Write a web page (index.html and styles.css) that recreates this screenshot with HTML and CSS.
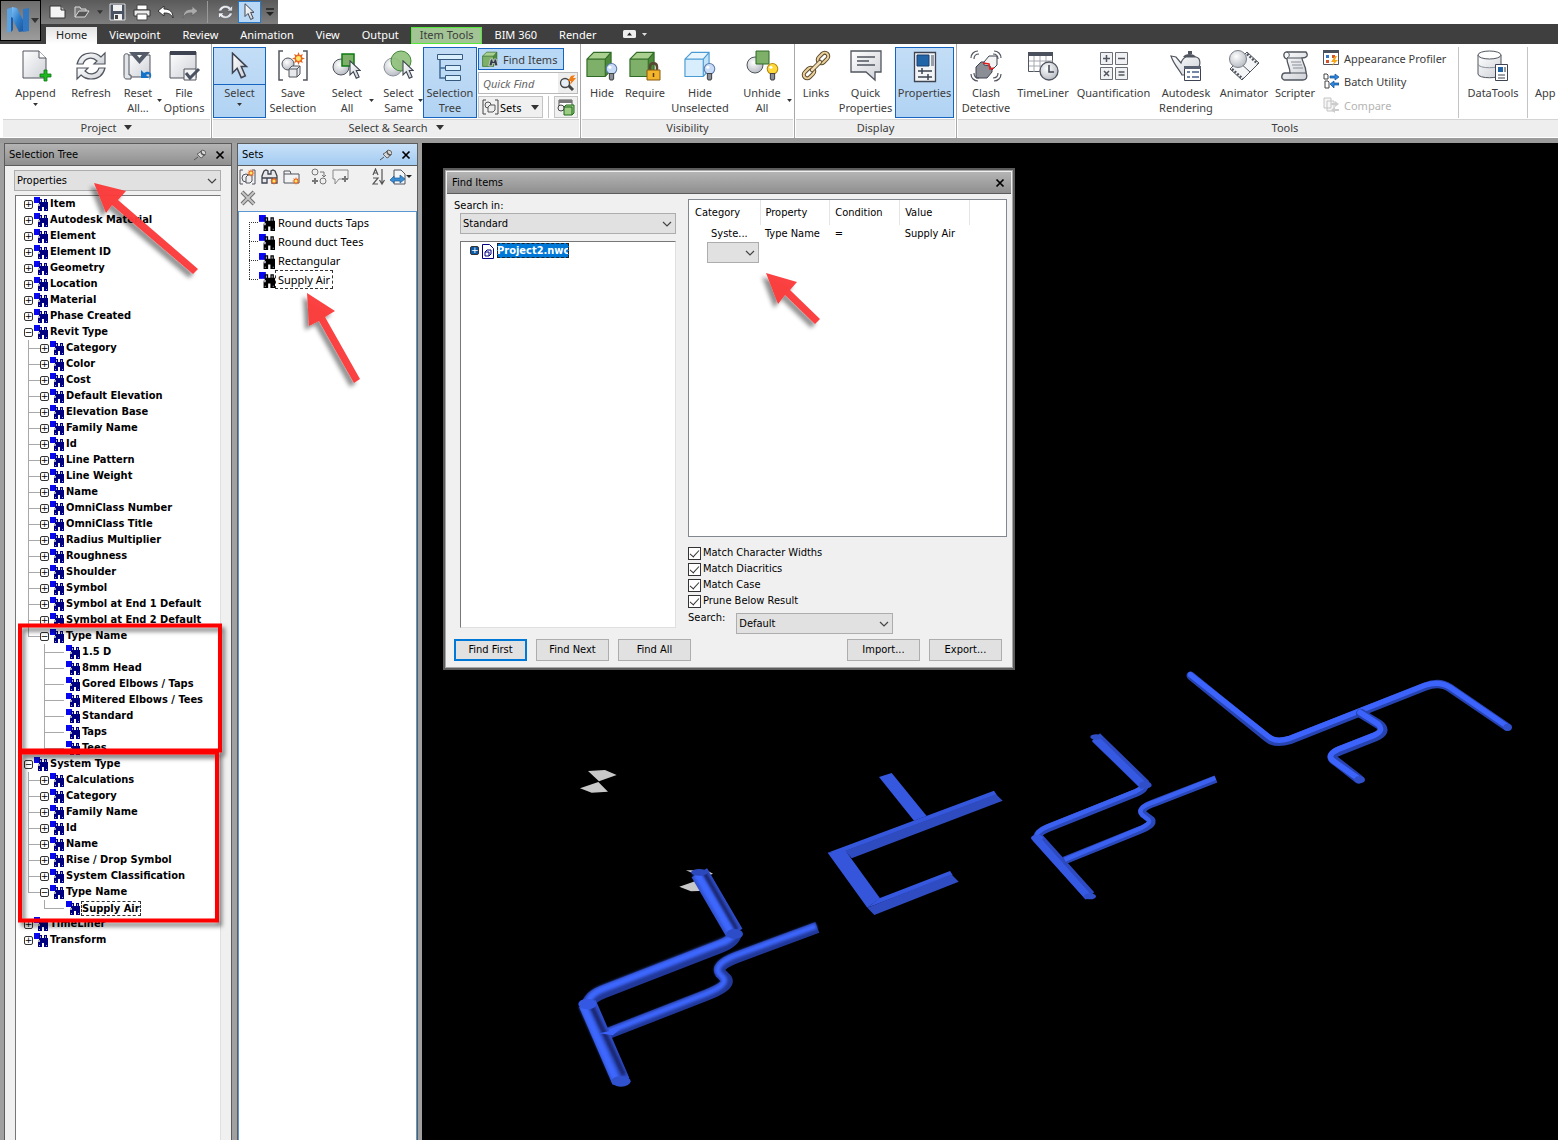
FILE: index.html
```html
<!DOCTYPE html>
<html lang="en">
<head>
<meta charset="utf-8">
<title>Navisworks</title>
<link rel="stylesheet" href="styles.css">
</head>
<body>
<svg class="sprite" aria-hidden="true">
  <defs>
    <linearGradient id="gPaper" x1="0" y1="0" x2="1" y2="1"><stop offset="0" stop-color="#fff"/><stop offset="1" stop-color="#cdd0d6"/></linearGradient>
    <radialGradient id="gBall" cx=".4" cy=".35" r=".7"><stop offset="0" stop-color="#fff"/><stop offset="1" stop-color="#b4b8c0"/></radialGradient>
    <linearGradient id="gN" x1="0" y1="0" x2="1" y2="1"><stop offset="0" stop-color="#7fc0f5"/><stop offset=".5" stop-color="#2d7cc9"/><stop offset="1" stop-color="#1b4f95"/></linearGradient>
    <filter id="fShadow" x="-20%" y="-20%" width="150%" height="150%"><feDropShadow dx="3" dy="4" stdDeviation="2" flood-color="#000" flood-opacity=".5"/></filter>
    <filter id="fLeft" x="-30%" y="-20%" width="160%" height="150%"><feDropShadow dx="-4" dy="4" stdDeviation="2" flood-color="#000" flood-opacity=".45"/></filter>
    <filter id="fRound" x="-10%" y="-10%" width="120%" height="120%"><feGaussianBlur stdDeviation="4"/></filter>
  </defs>
  <symbol id="binoc" viewBox="0 0 14 14">
    <path fill="#0808f0" d="M0 0h6v6H0z"/>
    <path fill="currentColor" d="M5 2h3v3h2V2h3v3h1v9h-4v-4H8v4H4V8l1-1z"/>
    <path fill="#aab" d="M6 3h1v2H6zM11 3h1v2h-1zM4 7h2v2H4zM5 12h1v1H5zM12 12h1v1h-1z"/>
  </symbol>
  <symbol id="cursor" viewBox="0 0 14 24"><path d="M1 1v17l4-4 3.500 8 3.500-1.600L8.500 12.500H13z" fill="url(#gPaper)" stroke="#3d4350" stroke-width="1.300"/></symbol>
  <symbol id="bulb" viewBox="0 0 12 17"><circle cx="6" cy="5.500" r="5" fill="var(--glow)" stroke="var(--rim)"/><path d="M4 10h4v5l-1 1H5l-1-1z" fill="#8a8f99" stroke="#444"/><circle cx="4.500" cy="4" r="1.500" fill="#fff"/></symbol>
  <symbol id="cube" viewBox="0 0 28 28"><path d="M1 9l7-7h18l-6 7z" fill="var(--top)"/><path d="M20 9l6-7v18l-6 7z" fill="var(--side)"/><path d="M1 9h19v18H1z" fill="var(--front)"/><path d="M1 9l7-7h18v18l-6 7H1zM1 9h19v18M20 9l6-7" fill="none" stroke="var(--edge)" stroke-width="1.200"/></symbol>
  <symbol id="spark" viewBox="0 0 12 12"><path d="M6 0l1.200 3L10 1.800 9 4.800 12 6 9 7.200l1 3L7.200 9 6 12 4.800 9 2 10.200l1-3L0 6l3-1.200-1-3L4.800 3z" fill="#e8641e"/><circle cx="6" cy="6" r="2.300" fill="#ffe96a"/></symbol>
  <symbol id="chev" viewBox="0 0 10 6"><path d="M1 1l4 4 4-4" fill="none" stroke="#444" stroke-width="1.200"/></symbol>
  <symbol id="tri" viewBox="0 0 8 5"><path d="M0 0h8L4 5z" fill="#333"/></symbol>
  <symbol id="pin" viewBox="0 0 12 12"><path d="M0 11l4-3" stroke="#555"/><path d="M3 5l4 4 2-1V7l3-2-1-3-3-1-3 3z" fill="#d8d8d8" stroke="#666"/><path d="M7 2c0 3 1 4 4 4" fill="none" stroke="#555" stroke-width="1.500"/></symbol>
  <symbol id="cross" viewBox="0 0 10 10"><path d="M1.500 1.500l7 7M8.500 1.500l-7 7" stroke="#000" stroke-width="1.700"/></symbol>
  <symbol id="refresh" viewBox="0 0 32 32"><path d="M2 14C4 6 10 3 16 3c4 0 7 1 10 4l4-4v11H19l3-3c-5-5-12-3-14 3z" fill="url(#gPaper)" stroke="#50555f" stroke-width="1.200"/><path d="M30 18c-2 8-8 11-14 11-4 0-7-1-10-4l-4 4V18h11l-3 3c5 5 12 3 14-3z" fill="url(#gPaper)" stroke="#50555f" stroke-width="1.200"/></symbol>
</svg>

<header class="top">
  <button class="app" aria-label="Application menu">
    <svg width="26" height="32" viewBox="0 0 26 32"><path d="M2 4l6-2v23l-6 3z" fill="#5aa2e0"/><path d="M7 2l5 1 8 16v7l-6 1L7 13z" fill="url(#gN)"/><path d="M18 4l6-1v23l-6 1z" fill="#3177c2"/><path d="M8 13v12l-2 2V12z" fill="#1f5ca5"/></svg>
    <svg width="8" height="5"><use href="#tri"/></svg>
  </button>
  <div class="qat">
    <button aria-label="New"><svg width="18" height="16" viewBox="0 0 18 16"><path d="M1 2h11l4 4v8H1z" fill="#f4f4f4" stroke="#333"/><path d="M12 2v4h4" fill="#bbb" stroke="#333"/></svg></button>
    <button aria-label="Open"><svg width="18" height="16" viewBox="0 0 18 16"><path d="M2 13V3h5l1 2h5v3" fill="#777" stroke="#ddd"/><path d="M2 13l4-6h10l-4 6z" fill="#555" stroke="#ddd"/></svg></button>
    <svg width="6" height="4"><use href="#tri"/></svg>
    <button aria-label="Save"><svg width="18" height="18" viewBox="0 0 18 18"><path d="M1 1h15v16H1z" fill="#4a5160" stroke="#ddd"/><path d="M4 2h9v6H4zM5 11h8v6H5z" fill="#f2f2f2"/><path d="M6 12h3v4H6z" fill="#444"/></svg></button>
    <button aria-label="Print"><svg width="18" height="18" viewBox="0 0 18 18"><path d="M4 2h10v5H4z" fill="#fff" stroke="#444"/><path d="M1 7h16v6H1z" fill="#ececec" stroke="#333"/><path d="M4 11h10v6H4z" fill="#fff" stroke="#444"/></svg></button>
    <button aria-label="Undo"><svg width="18" height="16" viewBox="0 0 18 16"><path d="M1 7l6-5v3c6 0 9 3 9 9-2-4-4-5-9-5v3z" fill="#fff" stroke="#333"/></svg></button>
    <button aria-label="Redo"><svg width="18" height="16" viewBox="0 0 18 16"><path d="M17 7l-6-5v3c-6 0-9 3-9 9 2-4 4-5 9-5v3z" fill="#aaa" stroke="#666"/></svg></button>
    <i class="qsep"></i>
    <button aria-label="Refresh"><svg width="17" height="16"><use href="#refresh"/></svg></button>
    <button class="on" aria-label="Select"><svg width="11" height="18"><use href="#cursor"/></svg></button>
    <button class="more" aria-label="Customize"><svg width="10" height="9" viewBox="0 0 10 9"><path d="M1 1h8" stroke="#222" stroke-width="1.500"/><path d="M1 4h8L5 8z" fill="#222"/></svg></button>
  </div>
  <nav class="tabs">
    <a href="#" class="tab home">Home</a><a href="#" class="tab">Viewpoint</a><a href="#" class="tab">Review</a><a href="#" class="tab">Animation</a><a href="#" class="tab">View</a><a href="#" class="tab">Output</a><a href="#" class="tab item">Item Tools</a><a href="#" class="tab">BIM 360</a><a href="#" class="tab">Render</a>
    <button class="mini" aria-label="Minimize ribbon"><svg width="24" height="8" viewBox="0 0 24 8"><rect width="13" height="8" rx="1.500" fill="#eee"/><path d="M4 5.500l2.500-3 2.500 3z" fill="#222"/><path d="M19 3h5l-2.500 3z" fill="#ddd"/></svg></button>
  </nav>
</header>

<section class="ribbon">
  <div class="panel project">
    <div class="tools">
      <button class="big"><svg width="32" height="32" viewBox="0 0 32 32"><path d="M3 1h16l7 7v20H3z" fill="url(#gPaper)" stroke="#50555f"/><path d="M19 1v7h7" fill="#fff" stroke="#50555f"/><path d="M24 20h3v4h4v3h-4v4h-3v-4h-4v-3h4z" fill="#1fb81f" stroke="#0b7a10" stroke-width=".8"/></svg><span>Append</span><svg class="under" width="5" height="3"><use href="#tri"/></svg></button>
      <button class="big"><svg width="32" height="32"><use href="#refresh"/></svg><span>Refresh</span></button>
      <button class="big"><svg width="32" height="32" viewBox="0 0 32 32"><path d="M6 5h22v22H6z" fill="url(#gPaper)" stroke="#50555f"/><path d="M2 6c0-3 5-3 5 0v19h2v4H5c-3 0-3-2-3-4z" fill="#e3e5e9" stroke="#50555f"/><path d="M7 2h21L17.500 14z" fill="#555c69"/><path d="M15 5h5l-2.500 3z" fill="#fff"/><path d="M19 20v8h8l-3-3c3-2 5 0 3 5 5-5 1-11-5-7z" fill="#1472c8"/></svg><span>Reset<br>All...</span><svg class="side" width="5" height="3"><use href="#tri"/></svg></button>
      <button class="big"><svg width="32" height="32" viewBox="0 0 32 32"><path d="M2 2h26v26H2z" fill="url(#gPaper)" stroke="#50555f"/><path d="M2 1h26v4H2z" fill="#3d4350"/><path d="M16 19h12v11H16z" fill="#f4f4f4" stroke="#50555f"/><path d="M18 23l4 5 9-9" fill="none" stroke="#4a5262" stroke-width="3"/></svg><span>File<br>Options</span></button>
    </div>
    <h2>Project <svg width="8" height="5"><use href="#tri"/></svg></h2>
  </div>

  <div class="panel search">
    <div class="tools">
      <button class="big on split"><span class="ico"><svg width="19" height="28"><use href="#cursor"/></svg></span><span>Select</span><svg class="under" width="5" height="3"><use href="#tri"/></svg></button>
      <button class="big"><svg width="32" height="32" viewBox="0 0 32 32"><path d="M6 1H2v29h4M26 1h4v29h-4" fill="none" stroke="#50555f" stroke-width="1.500"/><circle cx="11" cy="14" r="6" fill="url(#gBall)" stroke="#50555f"/><path d="M12 19l3-3h8v8l-3 3h-8zM12 19h8v8M20 19l3-3" fill="#e8e9ec" stroke="#50555f"/><use href="#spark" x="15" y="2" width="13" height="13"/></svg><span>Save<br>Selection</span></button>
      <button class="big"><svg width="32" height="32" viewBox="0 0 32 32"><circle cx="10" cy="17" r="8" fill="url(#gBall)" stroke="#50555f"/><path d="M11 4h12v12H11z" fill="#7fb069" stroke="#0c7a12" stroke-width="1.500"/><use href="#cursor" x="18" y="10" width="12" height="20"/></svg><span>Select<br>All</span><svg class="side" width="5" height="3"><use href="#tri"/></svg></button>
      <button class="big"><svg width="32" height="32" viewBox="0 0 32 32"><circle cx="10" cy="17" r="9" fill="url(#gBall)" stroke="#8a8f99"/><circle cx="18" cy="11" r="10" fill="#8fc07a" stroke="#3f8a35" fill-opacity=".9"/><use href="#cursor" x="19" y="10" width="12" height="20"/></svg><span>Select<br>Same</span><svg class="side" width="5" height="3"><use href="#tri"/></svg></button>
      <button class="big on"><svg width="32" height="32" viewBox="0 0 32 32"><path d="M6 6v21h6M6 17h6" fill="none" stroke="#3f6a94" stroke-width="1.500"/><path d="M3.500 3.500h25v5h-25zM11.500 14.500h15v5h-15zM11.500 24.500h15v5h-15z" fill="#d9effc" stroke="#35597d"/></svg><span>Selection<br>Tree</span></button>
      <div class="stack">
        <button class="find"><svg width="16" height="16" viewBox="0 0 28 28" class="green"><use href="#cube"/><path d="M12 26l3-12h4v4h2v-4h4l3 12h-6v-4h-4v4z" fill="#333b48" stroke="#fff"/></svg>Find Items</button>
        <div class="quick"><input type="text" placeholder="Quick Find" aria-label="Quick Find"><button aria-label="Search"><svg width="17" height="17" viewBox="0 0 17 17"><path d="M9 10l5 5" stroke="#444" stroke-width="3"/><circle cx="6" cy="8" r="4.500" fill="#e8eef5" stroke="#444" stroke-width="1.300"/><path d="M12 1l-3 5h3l-1 4 6-7h-3l2-3z" fill="#f07c14"/></svg></button></div>
        <div class="setsrow"><button class="sets"><svg width="17" height="16" viewBox="0 0 17 16"><path d="M4 1H1v14h3M13 1h3v14h-3" fill="none" stroke="#444"/><circle cx="6" cy="6" r="3" fill="#eee" stroke="#555"/><path d="M6 8l2-2h5v5l-2 2H6z" fill="#eee" stroke="#555"/></svg>Sets<svg class="push" width="8" height="5"><use href="#tri"/></svg></button><i></i><button class="sq" aria-label="Selection inspector"><svg width="18" height="18" viewBox="0 0 18 18"><path d="M2 2h13v10H2z" fill="#fff" stroke="#555"/><path d="M2 2h13v3H2z" fill="#777"/><path d="M7 9l2-2h8v8l-2 2H7z" fill="#9ccb84" stroke="#1d6b17"/><path d="M7 9h8v8" fill="none" stroke="#1d6b17"/><circle cx="4" cy="10" r="3" fill="#eee" stroke="#444"/></svg></button></div>
      </div>
    </div>
    <h2>Select &amp; Search <svg width="8" height="5"><use href="#tri"/></svg></h2>
  </div>

  <div class="panel visibility">
    <div class="tools">
      <button class="big"><svg width="32" height="32" viewBox="0 0 32 32" class="green"><use href="#cube" width="27" height="28"/><use href="#bulb" class="cool" x="19" y="13" width="13" height="18"/></svg><span>Hide</span></button>
      <button class="big"><svg width="32" height="32" viewBox="0 0 32 32" class="green"><use href="#cube" width="27" height="28"/><path d="M21 21v-4c0-5 7-5 7 0v4" fill="none" stroke="#5a4632" stroke-width="2.500"/><path d="M18 20h13v10H18z" fill="#f3b52c" stroke="#8a5a10"/><path d="M24.500 23v4" stroke="#5a3a08" stroke-width="1.500"/></svg><span>Require</span></button>
      <button class="big"><svg width="32" height="32" viewBox="0 0 32 32" class="ice"><use href="#cube" width="27" height="28"/><use href="#bulb" class="cool" x="19" y="13" width="13" height="18"/></svg><span>Hide<br>Unselected</span></button>
      <button class="big"><svg width="32" height="32" viewBox="0 0 32 32"><circle cx="9" cy="15" r="8" fill="url(#gBall)" stroke="#50555f"/><path d="M10 1h13v13H10z" fill="#7fb069" stroke="#2f6b25"/><use href="#bulb" class="warm" x="20" y="13" width="13" height="18"/></svg><span>Unhide<br>All</span><svg class="side" width="5" height="3"><use href="#tri"/></svg></button>
    </div>
    <h2>Visibility</h2>
  </div>

  <div class="panel display">
    <div class="tools">
      <button class="big"><svg width="32" height="32" viewBox="0 0 32 32"><g fill="none" stroke="#5b4a30" stroke-width="4"><rect x="-6" y="-3.500" width="12" height="7" rx="3.500" transform="translate(23 8) rotate(-45)"/><rect x="-6" y="-3.500" width="12" height="7" rx="3.500" transform="translate(9 23) rotate(-45)"/></g><g fill="none" stroke="#ecd09a" stroke-width="2"><rect x="-6" y="-3.500" width="12" height="7" rx="3.500" transform="translate(23 8) rotate(-45)"/><rect x="-6" y="-3.500" width="12" height="7" rx="3.500" transform="translate(9 23) rotate(-45)"/></g><path d="M12 20l8-8" stroke="#5b4a30" stroke-width="4.500" stroke-linecap="round"/><path d="M12 20l8-8" stroke="#f2ddb2" stroke-width="2.500" stroke-linecap="round"/></svg><span>Links</span></button>
      <button class="big"><svg width="32" height="32" viewBox="0 0 32 32"><path d="M1 1h30v21h-6v8l-9-8H1z" fill="url(#gPaper)" stroke="#50555f" stroke-width="1.300"/><path d="M7 7h18M7 11h12M7 15h18" stroke="#50555f" stroke-width="1.500"/></svg><span>Quick<br>Properties</span></button>
      <button class="big on"><svg width="32" height="32" viewBox="0 0 32 32"><path d="M5.500 1.500h21v29h-21z" fill="#f3f4f6" stroke="#3d4350" stroke-width="1.300"/><path d="M8 4h12v11H8z" fill="#2264a8" stroke="#173f6e"/><path d="M22 4h3v11h-3z" fill="#9aa0aa"/><path d="M9 20h14M9 26h14M13 17v6M19 23v6" stroke="#3d4350" stroke-width="1.500"/></svg><span>Properties</span></button>
    </div>
    <h2>Display</h2>
  </div>

  <div class="panel last">
    <div class="tools">
      <button class="big"><svg width="32" height="32" viewBox="0 0 32 32"><path d="M6 17l5-5h11v10l-5 6H6z" fill="#8b8e94" stroke="#3d4350"/><path d="M14 12l5-6h8v9l-5 5-2-4-6-1z" fill="#f4f4f4" stroke="#3d4350"/><path d="M13 13l6 1 1 5 4-1" fill="none" stroke="#e02020" stroke-width="1.500"/><path d="M1 8c0-4 3-7 7-7M4 9c0-3 2-5 5-5M31 8c0-4-3-7-7-7M28 9c0-3-2-5-5-5M1 24c0 4 3 7 7 7M4 23c0 3 2 5 5 5M31 24c0 4-3 7-7 7M28 23c0 3-2 5-5 5" fill="none" stroke="#50555f" stroke-width="1.200"/></svg><span>Clash<br>Detective</span></button>
      <button class="big"><svg width="32" height="32" viewBox="0 0 32 32"><path d="M1.500 2.500h24v19h-24z" fill="#fff" stroke="#50555f"/><path d="M1 2h25v4H1z" fill="#4a505c"/><path d="M2 11h24M2 16h24M7 6v16M13 6v16M19 6v16" stroke="#a4a8b0"/><circle cx="22" cy="21" r="9" fill="url(#gBall)" stroke="#50555f" stroke-width="1.300"/><path d="M22 15v7h5" fill="none" stroke="#3d4350" stroke-width="1.500"/></svg><span>TimeLiner</span></button>
      <button class="big"><svg width="32" height="32" viewBox="0 0 32 32"><path d="M2.500 2.500h12v12h-12zM17.500 2.500h12v12h-12zM2.500 17.500h12v12h-12zM17.500 17.500h12v12h-12z" fill="#f0f1f3" stroke="#6a6e76"/><path d="M5 8.500h7M8.500 5v7M20 8.500h7M6 21l5 5M11 21l-5 5M20.500 22h6M20.500 25h6" stroke="#50555f" stroke-width="1.500"/></svg><span>Quantification</span></button>
      <button class="big"><svg width="32" height="32" viewBox="0 0 32 32"><path d="M1 6l5 1 5 6c1-3 2-5 5-6h10c5 1 5 9 1 12l-3 6H12C9 19 4 15 1 6z" fill="url(#gPaper)" stroke="#50555f" stroke-width="1.200"/><path d="M13 7c2-4 11-4 13 0zM18 1h4v3h-4z" fill="#50555f"/><path d="M14.500 16.500h16v14h-16z" fill="#fff" stroke="#3d4350"/><path d="M14 16h17v3H14z" fill="#5a6170"/><path d="M17 22h3M22 22h7M17 27h3M22 27h7" stroke="#45618a" stroke-width="1.500"/></svg><span>Autodesk<br>Rendering</span></button>
      <button class="big"><svg width="32" height="32" viewBox="0 0 32 32"><path d="M2 19L19 2l12 11-17 17z" fill="#f4f5f6" stroke="#50555f"/><path d="M10 11l12 11" stroke="#50555f"/><path d="M4 19l11 10M19 4l11 10" fill="none" stroke="#50555f" stroke-width="2.500" stroke-dasharray="2 1.500"/><circle cx="10" cy="9" r="8.500" fill="url(#gBall)" stroke="#7a7f89"/></svg><span>Animator</span></button>
      <button class="big"><svg width="32" height="32" viewBox="0 0 32 32"><path d="M7 2h20c3 4 0 6-4 6 0 4 4 8 4 14 2 6 0 8-3 8H5c-4-2-2-7 1-7h5c0-6-3-9-3-14-4-1-4-6-1-7z" fill="url(#gPaper)" stroke="#50555f" stroke-width="1.300"/><path d="M8 8h15M8 2c3 1 3 5 0 6M11 23h16" fill="none" stroke="#50555f"/><path d="M12 12h10M13 15h10M14 18h10" stroke="#8a8f99"/></svg><span>Scripter</span></button>
      <div class="links">
        <button><svg width="16" height="16" viewBox="0 0 16 16"><path d="M.5.500h15v14H.5z" fill="#fff" stroke="#50555f"/><path d="M0 0h16v3H0z" fill="#4a505c"/><path d="M3 5h3v3H3z" fill="#3475c4"/><path d="M9 5h3v3H9zM3 10h3v3H3z" fill="#d2542c"/><path d="M12 6l-4 6h3l-2 4 6-6h-3l2-4z" fill="#f7a41d"/></svg>Appearance Profiler</button>
        <button><svg width="16" height="16" viewBox="0 0 16 16"><path d="M1 1h3l1 1v4H1zM2 8h3l1 1v6H2z" fill="#fff" stroke="#444"/><path d="M7 3h5V1l4 3-4 3V5H7zM16 10h-5V8l-4 3 4 4v-3h5z" fill="#2d86dc" stroke="#0d4d94" stroke-width=".7"/></svg>Batch Utility</button>
        <button disabled><svg width="16" height="16" viewBox="0 0 16 16"><path d="M1 1h7v10H1zM4 4h7v10H4z" fill="#f6f6f6" stroke="#c4c4c4"/><path d="M8 6h4V4l4 3-4 3V8H8zM16 12h-4v-2l-4 3 4 3v-2h4z" fill="#ccc"/></svg>Compare</button>
      </div>
      <button class="big edge"><svg width="32" height="32" viewBox="0 0 32 32"><path d="M1 5v19c0 5 23 5 23 0V5" fill="url(#gPaper)" stroke="#50555f"/><ellipse cx="12.500" cy="5" rx="11.500" ry="4" fill="#fff" stroke="#50555f"/><path d="M1 14c0 5 23 5 23 0" fill="none" stroke="#8a8f99"/><path d="M18.500 14.500h12v16h-12z" fill="#fff" stroke="#3d4350"/><path d="M21 17h5v5h-5z" fill="#2264a8"/><path d="M27 17h2v5h-2z" fill="#999"/><path d="M21 25h7M21 28h7" stroke="#3d4350"/></svg><span>DataTools</span></button>
      <button class="big edge manager"><span>App</span></button>
    </div>
    <h2>Tools</h2>
  </div>
</section>

<main class="work">
  <section class="dock tree-dock">
    <div class="cap">Selection Tree<svg class="push" width="12" height="12"><use href="#pin"/></svg><button aria-label="Close"><svg width="10" height="10"><use href="#cross"/></svg></button></div>
    <div class="combo"><select aria-label="Tree mode"><option>Properties</option></select><svg width="10" height="6"><use href="#chev"/></svg></div>
    <ul class="tree">
      <li><div><button>+</button><svg><use href="#binoc"/></svg>Item</div></li>
      <li><div><button>+</button><svg><use href="#binoc"/></svg>Autodesk Material</div></li>
      <li><div><button>+</button><svg><use href="#binoc"/></svg>Element</div></li>
      <li><div><button>+</button><svg><use href="#binoc"/></svg>Element ID</div></li>
      <li><div><button>+</button><svg><use href="#binoc"/></svg>Geometry</div></li>
      <li><div><button>+</button><svg><use href="#binoc"/></svg>Location</div></li>
      <li><div><button>+</button><svg><use href="#binoc"/></svg>Material</div></li>
      <li><div><button>+</button><svg><use href="#binoc"/></svg>Phase Created</div></li>
      <li><div><button>−</button><svg><use href="#binoc"/></svg>Revit Type</div>
        <ul>
          <li><div><button>+</button><svg><use href="#binoc"/></svg>Category</div></li>
          <li><div><button>+</button><svg><use href="#binoc"/></svg>Color</div></li>
          <li><div><button>+</button><svg><use href="#binoc"/></svg>Cost</div></li>
          <li><div><button>+</button><svg><use href="#binoc"/></svg>Default Elevation</div></li>
          <li><div><button>+</button><svg><use href="#binoc"/></svg>Elevation Base</div></li>
          <li><div><button>+</button><svg><use href="#binoc"/></svg>Family Name</div></li>
          <li><div><button>+</button><svg><use href="#binoc"/></svg>Id</div></li>
          <li><div><button>+</button><svg><use href="#binoc"/></svg>Line Pattern</div></li>
          <li><div><button>+</button><svg><use href="#binoc"/></svg>Line Weight</div></li>
          <li><div><button>+</button><svg><use href="#binoc"/></svg>Name</div></li>
          <li><div><button>+</button><svg><use href="#binoc"/></svg>OmniClass Number</div></li>
          <li><div><button>+</button><svg><use href="#binoc"/></svg>OmniClass Title</div></li>
          <li><div><button>+</button><svg><use href="#binoc"/></svg>Radius Multiplier</div></li>
          <li><div><button>+</button><svg><use href="#binoc"/></svg>Roughness</div></li>
          <li><div><button>+</button><svg><use href="#binoc"/></svg>Shoulder</div></li>
          <li><div><button>+</button><svg><use href="#binoc"/></svg>Symbol</div></li>
          <li><div><button>+</button><svg><use href="#binoc"/></svg>Symbol at End 1 Default</div></li>
          <li><div><button>+</button><svg><use href="#binoc"/></svg>Symbol at End 2 Default</div></li>
          <li><div><button>−</button><svg><use href="#binoc"/></svg>Type Name</div>
            <ul class="leaves">
              <li><div><svg><use href="#binoc"/></svg>1.5 D</div></li>
              <li><div><svg><use href="#binoc"/></svg>8mm Head</div></li>
              <li><div><svg><use href="#binoc"/></svg>Gored Elbows / Taps</div></li>
              <li><div><svg><use href="#binoc"/></svg>Mitered Elbows / Tees</div></li>
              <li><div><svg><use href="#binoc"/></svg>Standard</div></li>
              <li><div><svg><use href="#binoc"/></svg>Taps</div></li>
              <li><div><svg><use href="#binoc"/></svg>Tees</div></li>
            </ul>
          </li>
        </ul>
      </li>
      <li><div><button>−</button><svg><use href="#binoc"/></svg>System Type</div>
        <ul>
          <li><div><button>+</button><svg><use href="#binoc"/></svg>Calculations</div></li>
          <li><div><button>+</button><svg><use href="#binoc"/></svg>Category</div></li>
          <li><div><button>+</button><svg><use href="#binoc"/></svg>Family Name</div></li>
          <li><div><button>+</button><svg><use href="#binoc"/></svg>Id</div></li>
          <li><div><button>+</button><svg><use href="#binoc"/></svg>Name</div></li>
          <li><div><button>+</button><svg><use href="#binoc"/></svg>Rise / Drop Symbol</div></li>
          <li><div><button>+</button><svg><use href="#binoc"/></svg>System Classification</div></li>
          <li><div><button>−</button><svg><use href="#binoc"/></svg>Type Name</div>
            <ul class="leaves"><li><div><svg><use href="#binoc"/></svg><span class="focus">Supply Air</span></div></li></ul>
          </li>
        </ul>
      </li>
      <li><div><button>+</button><svg><use href="#binoc"/></svg>TimeLiner</div></li>
      <li><div><button>+</button><svg><use href="#binoc"/></svg>Transform</div></li>
    </ul>
  </section>

  <section class="dock sets-dock">
    <div class="cap">Sets<svg class="push" width="12" height="12"><use href="#pin"/></svg><button aria-label="Close"><svg width="10" height="10"><use href="#cross"/></svg></button></div>
    <div class="bar">
      <button aria-label="Save selection"><svg width="18" height="18" viewBox="0 0 18 18"><path d="M4 2H1v14h3M13 2h3v14h-3" fill="none" stroke="#50555f"/><circle cx="7" cy="10" r="4" fill="#eee" stroke="#50555f"/><path d="M7 9l2-2h4v6l-2 2H7z" fill="#eee" stroke="#50555f"/><use href="#spark" x="8" y="1" width="8" height="8"/></svg></button>
      <button aria-label="Save search"><svg width="18" height="18" viewBox="0 0 18 18"><path d="M1 15V8l2-5 2-1 2 1v3h3V3l2-1 2 1 2 5v7h-5v-5H6v5zM1 10h5M11 10h5" fill="#e8e8ea" stroke="#3d4350" stroke-width="1.300"/><use href="#spark" x="9" y="9" width="8" height="8"/></svg></button>
      <button aria-label="New folder"><svg width="18" height="18" viewBox="0 0 18 18"><path d="M1 15V3h6l1 3h8v9zM1 6h7" fill="#f2f3f5" stroke="#50555f"/><use href="#spark" x="9" y="9" width="8" height="8"/></svg></button>
      <button class="wide" aria-label="Duplicate"><svg width="18" height="18" viewBox="0 0 18 18" fill="none" stroke="#777"><circle cx="5" cy="4" r="3"/><circle cx="13" cy="13" r="3"/><path d="M10 4h4v5M12 7l2 2 2-2"/><path d="M5 10v6M2 13h6" stroke-width="2"/></svg></button>
      <button aria-label="Add comment"><svg width="18" height="18" viewBox="0 0 18 18"><path d="M1 2h15v9H7l-4 5v-5H1z" fill="#f2f2f2" stroke="#888"/><path d="M13 8v6M10 11h6" stroke="#777" stroke-width="2"/></svg></button>
      <button class="wider" aria-label="Sort"><svg width="14" height="18" viewBox="0 0 14 18" fill="none" stroke="#555" stroke-width="1.200"><path d="M1 7l2.500-6L6 7M2 5h3M1 10h5l-5 6h5M10 1v14M7.500 12l2.500 4 2.500-4"/></svg></button>
      <button aria-label="Import and export"><svg width="22" height="18" viewBox="0 0 22 18"><path d="M4 2h7l4 4v10H4z" fill="#f4f5f7" stroke="#50555f"/><path d="M0 12l4-4v2h6V7l5 4-5 4v-2H4v2z" fill="#3a8bd0" stroke="#1c5d9a" stroke-width=".7"/><path d="M16 7h6l-3 3z" fill="#222"/></svg></button>
      <button class="del" aria-label="Delete"><svg width="16" height="16" viewBox="0 0 16 16"><path d="M2 2l12 12M14 2L2 14" stroke="#707070" stroke-width="4"/><path d="M2 2l12 12M14 2L2 14" stroke="#c4c4c4" stroke-width="2"/></svg></button>
    </div>
    <ul class="setlist">
      <li><svg><use href="#binoc"/></svg><span>Round ducts Taps</span></li>
      <li><svg><use href="#binoc"/></svg><span>Round duct Tees</span></li>
      <li><svg><use href="#binoc"/></svg><span>Rectangular</span></li>
      <li><svg><use href="#binoc"/></svg><span class="focus">Supply Air</span></li>
    </ul>
  </section>

  <section class="view">
    <svg class="scene" width="1136" height="997" viewBox="422 143 1136 997" role="img" aria-label="Duct model">
      <g transform="translate(560 740) scale(.33333)">
        <path fill="#c8c8c8" d="M84 93l51-3 35 15-53 19zM60 145l55-19 29 29-49 3zM378 391h62l19 10-29 12zM358 440l47-16 35 28-47 2z"/>
        <path fill="#3558df" d="M957 111l38-12 105 129-38 14z"/>
        <path fill="#3457dc" d="M803 338l499-186 8 12-455 170z"/>
        <path fill="#2f4bc0" d="M855 332l453-169 20 19-453 173z"/>
        <path fill="#3556da" d="M803 338l52-8 105 145-38 28z"/>
        <path fill="#3558df" d="M922 503l36-28 212-82 8 12z"/>
        <path fill="#2f4cc2" d="M922 503l252-100 22 22-253 100z"/>
        <g fill="none" stroke-linejoin="round">
          <path d="M132 885L440 765Q510 738 500 718L482 700Q466 676 530 652L772 562" stroke="#213899" stroke-width="34"/>
          <path d="M132 880L440 760Q500 736 492 716L475 698Q462 672 526 646L768 558" stroke="#3e67ff" stroke-width="17" filter="url(#fRound)"/>
          <path d="M526 575Q526 602 478 620L130 755Q90 770 84 795" stroke="#213899" stroke-width="40"/>
          <path d="M522 575Q520 598 474 612L126 748Q88 762 80 795" stroke="#3e67ff" stroke-width="21" filter="url(#fRound)"/>
          <path d="M418 398L524 580M82 790L183 1024" stroke="#3050cc" stroke-width="54"/>
          <path d="M432 398L530 570M96 800L192 1006" stroke="#14236a" stroke-width="14" filter="url(#fRound)"/>
          <path d="M408 396L512 575M68 796L168 1020" stroke="#3e67ff" stroke-width="22" filter="url(#fRound)"/>
        </g>
        <ellipse cx="418" cy="397" rx="25" ry="10" fill="#2c49bb"/>
        <ellipse cx="524" cy="582" rx="25" ry="15" fill="#2c4cc8"/>
        <ellipse cx="82" cy="792" rx="27" ry="16" fill="#3458e2"/>
        <ellipse cx="183" cy="1024" rx="29" ry="16" fill="#3152cf"/>
        <path d="M118 880l64-14-24 20z" fill="#3b63fb"/>
      </g>
      <g transform="translate(1010 660) scale(.33333)" fill="none">
        <path d="M400 368Q412 384 380 398L114 504Q80 518 82 534" stroke="#2b48bb" stroke-width="24"/>
        <path d="M398 366Q408 380 376 394L112 500Q78 514 80 534" stroke="#3b61f0" stroke-width="14"/>
        <path d="M258 232L406 376M80 530L240 708" stroke="#2d4ac0" stroke-width="34"/>
        <path d="M254 234L402 378M76 533L234 710" stroke="#3659e4" stroke-width="22"/>
        <path d="M162 602L385 512Q434 492 424 480L400 462Q384 446 435 428L618 357" stroke="#2b48bb" stroke-width="23"/>
        <path d="M164 599L385 508Q424 490 416 480L396 464Q376 444 435 425L616 354" stroke="#3b61f0" stroke-width="13"/>
        <ellipse cx="259" cy="231" rx="18" ry="8" fill="#3050c8"/>
        <ellipse cx="406" cy="375" rx="19" ry="11" fill="#2f4fc8"/>
        <ellipse cx="81" cy="534" rx="18" ry="10" fill="#3659e4"/>
        <ellipse cx="240" cy="709" rx="18" ry="9" fill="#2f4fcb"/>
        <g stroke-linecap="round">
          <path d="M542 47L772 234Q796 254 840 240L1245 80Q1288 62 1320 84L1490 200" stroke="#2743b0" stroke-width="25"/>
          <path d="M541 44L776 230Q798 248 836 236L1245 76Q1288 62 1320 82L1488 197" stroke="#3c64fc" stroke-width="16"/>
          <path d="M1052 160L1108 194Q1134 214 1096 230L990 272Q950 288 978 304L1046 357" stroke="#2743b0" stroke-width="28"/>
          <path d="M1050 157L1104 192Q1124 212 1092 226L984 268Q946 286 972 304L1044 355" stroke="#3c64fc" stroke-width="17"/>
        </g>
        <ellipse cx="1493" cy="202" rx="13" ry="11" fill="#3050cc"/>
        <ellipse cx="1049" cy="359" rx="16" ry="11" fill="#3050cc"/>
      </g>
    </svg>

    <form class="dialog" onsubmit="return false">
      <div class="cap">Find Items<button type="button" class="push" aria-label="Close"><svg width="10" height="10"><use href="#cross"/></svg></button></div>
      <div class="dbody">
        <div class="left">
          <label for="scope">Search in:</label>
          <div class="combo"><select id="scope"><option>Standard</option></select><svg width="10" height="6"><use href="#chev"/></svg></div>
          <div class="files"><button type="button">+</button><svg width="12" height="15" viewBox="0 0 12 15"><path d="M.5.500h7l4 4v10H.5z" fill="#fff" stroke="#000080"/><path d="M3 8l2-2h4v4l-2 2H3zM3 8h4v4" fill="none" stroke="#000080"/></svg><span>Project2.nwc</span></div>
        </div>
        <div class="right">
          <div class="grid">
            <table>
              <thead><tr><th>Category</th><th>Property</th><th>Condition</th><th>Value</th></tr></thead>
              <tbody><tr><td class="ind">Syste...</td><td>Type Name</td><td>=</td><td>Supply Air</td></tr></tbody>
            </table>
            <div class="combo cell"><select aria-label="Category"><option></option></select><svg width="10" height="6"><use href="#chev"/></svg></div>
          </div>
          <div class="checks">
            <label><input type="checkbox" checked>Match Character Widths</label>
            <label><input type="checkbox" checked>Match Diacritics</label>
            <label><input type="checkbox" checked>Match Case</label>
            <label><input type="checkbox" checked>Prune Below Result</label>
          </div>
          <div class="mode"><label for="mode">Search:</label><div class="combo"><select id="mode"><option>Default</option></select><svg width="10" height="6"><use href="#chev"/></svg></div></div>
        </div>
      </div>
      <div class="actions"><button class="primary">Find First</button><button>Find Next</button><button>Find All</button><button class="push">Import...</button><button>Export...</button></div>
    </form>
  </section>

  <svg class="notes" width="1558" height="997" viewBox="0 143 1558 997" aria-hidden="true">
    <g fill="none" stroke="#fe0000" stroke-width="4" filter="url(#fShadow)"><path d="M20 625.500h200v125H20z"/><path d="M20 752.500h197v168H20z"/></g>
    <g fill="#fb3c3c" fill-opacity=".97" filter="url(#fLeft)">
      <path d="M94 183l32 8-8 9 80 69-5 5-81-69-6 8z"/>
      <path d="M307 293l28 18-10 6 35 62-6 4-35-62-10 5z"/>
      <path d="M766 273l31 9-7 8 30 29-5 5-30-29-7 9z"/>
    </g>
  </svg>
</main>
</body>
</html>
```
FILE: styles.css
```css
* { box-sizing: border-box; }
body {
  margin: 0;
  min-height: 100vh;
  display: flex;
  flex-direction: column;
  overflow: hidden;
  background: #fff;
  color: #000;
  font: 11px/16px "DejaVu Sans Condensed", "DejaVu Sans", sans-serif;
}
button, select, input { font: inherit; color: inherit; }
button { margin: 0; padding: 0; border: 0; background: none; }
ul { list-style: none; margin: 0; padding: 0; }
h2 { margin: 0; font: inherit; }
svg { display: block; flex: none; }
.sprite { position: absolute; width: 0; height: 0; }
.push { margin-left: auto; }

/* Title row and tabs */
.top {
  display: grid;
  grid-template-columns: 41px 237px 1fr;
  grid-template-rows: 24px 20px;
  font-family: "Noto Sans", sans-serif;
}
.app {
  grid-area: 1 / 1 / 3 / 2;
  z-index: 1;
  height: 41px;
  display: flex;
  align-items: center;
  justify-content: center;
  padding-left: 3px;
  border: 1px solid #000;
  background: linear-gradient(#6e6e6e, #9c9c9c);
}
.qat {
  grid-area: 1 / 2;
  display: flex;
  align-items: center;
  gap: 6px;
  padding-left: 8px;
  background: linear-gradient(#5a5a5a, #7e7e7e);
}
.qat button { flex: none; display: grid; place-items: center; width: 18px; height: 22px; }
.qsep { width: 1px; height: 22px; margin: 0 2px; background: #999; }
.qat .on { width: 23px; margin-left: -2px; border: 1px solid #2a78c8; background: #b9d8f5; }
.qat .more { width: 10px; margin-left: -2px; }
.tabs {
  grid-area: 2 / 1 / 3 / 4;
  display: flex;
  align-items: flex-end;
  gap: 2px;
  padding-left: 46px;
  background: #3f3f3f;
}
.tab { padding: 0 10px; height: 17px; line-height: 15px; color: #fff; text-decoration: none; }
.tab.home { color: #222; background: linear-gradient(#e2e2e2, #fff); }
.tab.item { height: 17px; line-height: 13px; padding: 0 8px; border: 1px solid #55e83a; background: #a3c494; color: #3c3c3c; }
.mini { align-self: center; margin-left: 15px; }

/* Ribbon */
.ribbon {
  display: flex;
  height: 99px;
  overflow: hidden;
  border-bottom: 5px solid #9b9b9b;
  padding-left: 2px;
  color: #3c3c3c;
  font: 11px/15px "Noto Sans", sans-serif;
}
.panel { flex: none; display: flex; flex-direction: column; padding: 3px 1px 1px; border-right: 1px solid #a8a8a8; }
.tools { height: 73px; display: grid; grid-template-rows: 71px; }
.panel h2 { flex: 1; display: flex; align-items: center; justify-content: center; gap: 8px; padding-bottom: 2px; border-top: 1px solid #d4d4d4; background: #eee; }
.project { width: 210px; }
.project .tools { grid-template-columns: 65px 46px 48px 44px; }
.search { width: 369px; }
.search .tools { grid-template-columns: 53px 54px 54px 49px 54px 101px; }
.visibility { width: 214px; }
.visibility .tools { grid-template-columns: 40px 46px 64px 60px; }
.display { width: 162px; }
.display .tools { grid-template-columns: 40px 59px 59px; }
.last { width: 656px; border: 0; }
.last .tools { grid-template-columns: 56px 58px 83px 62px 54px 48px 139px 69px 83px; }
.big {
  display: grid;
  grid-template-columns: 1fr auto 1fr;
  grid-template-rows: 38px auto auto;
  justify-items: center;
  align-content: start;
  white-space: nowrap;
  text-align: center;
}
.big > svg:first-child, .big > .ico { grid-area: 1 / 1 / 2 / 4; align-self: center; overflow: visible; }
.big > span:not(.ico) { grid-area: 2 / 1 / 3 / 4; justify-self: center; margin: 0 -8px; }
.big .under { grid-area: 3 / 2; margin-top: 3px; }
.big .side { grid-area: 2 / 3; justify-self: end; align-self: center; }
.big.on { border: 1px solid #1565c0; background: linear-gradient(#c3ddf6, #b1d3f3); grid-template-rows: 37px auto auto; }
.split .ico { width: 100%; height: 37px; display: grid; place-items: center; border-bottom: 1px solid #1565c0; }
.big.edge { border-left: 1px solid #c4c4c4; }
.big.manager > span { justify-self: start; margin: 0 0 0 7px; }

.stack { display: grid; grid-template-rows: 22px 22px 22px; gap: 2px; padding: 1px 0 0 1px; align-content: start; }
.find { display: flex; align-items: center; gap: 5px; width: 86px; padding-left: 3px; border: 1px solid #1565c0; background: #b9d8f5; white-space: nowrap; }
.quick { display: flex; width: 100px; border: 1px solid #b8b8b8; background: #fff; }
.quick input { flex: 1; min-width: 0; border: 0; padding: 0 4px; font-style: italic; }
.quick input::placeholder { color: #666; opacity: 1; }
.quick button { width: 19px; display: grid; place-items: center; background: #eee; }
.setsrow { display: flex; justify-content: space-between; width: 100px; color: #000; }
.sets { display: flex; align-items: center; gap: 1px; width: 65px; padding: 0 3px; border: 1px solid #c4c4c4; background: #f0f0f0; }
.setsrow i { width: 1px; background: #c4c4c4; }
.sq { width: 24px; display: grid; place-items: center; border: 1px solid #c4c4c4; background: #f0f0f0; }

.links { display: grid; grid-template-rows: 22px 24px 24px; padding-left: 4px; }
.links button { display: flex; align-items: center; gap: 5px; white-space: nowrap; }
.links button:disabled { color: #b4b4b4; }

/* Work area */
.work { position: relative; flex: 1; display: flex; background: #a0a0a0; padding-left: 4px; }
.dock { flex: none; display: flex; flex-direction: column; border: 1px solid #5c5c5c; border-bottom: 0; background: #f0f0f0; }
.cap { display: flex; align-items: center; gap: 9px; height: 22px; padding: 0 6px 0 4px; border-bottom: 1px solid #5c5c5c; background: linear-gradient(#b4b4b4, #8f8f8f); }
.tree-dock { width: 228px; margin-right: 5px; }
.sets-dock { width: 181px; margin-right: 4px; }
.sets-dock .cap { background: linear-gradient(#c9e1f9, #a3cbf1); }

.combo { display: grid; grid-template-columns: 1fr auto; align-items: center; height: 21px; border: 1px solid #adadad; background: #e1e1e1; }
.combo select { grid-area: 1 / 1 / 2 / 3; appearance: none; width: 100%; height: 19px; padding: 0 2px; border: 0; background: none; }
.combo svg { grid-area: 1 / 2; margin-right: 3px; pointer-events: none; }
.tree-dock .combo { margin: 4px 10px 4px 9px; }

.tree {
  flex: 1;
  margin: 0 10px 0 10px;
  padding-left: 8px;
  border-top: 1px solid #777;
  border-left: 1px solid #777;
  border-right: 1px solid #e0e0e0;
  background: #fff;
  font-weight: bold;
  white-space: nowrap;
}
.tree div { display: flex; align-items: center; height: 16px; }
.tree svg { width: 14px; height: 14px; margin: 0 2px 0 1px; color: #000080; }
.tree button, .files button {
  width: 9px;
  height: 9px;
  border: 1px solid #333;
  border-radius: 2px;
  background: #fff;
  font: 9px/7px "DejaVu Sans", sans-serif;
}
.tree button { display: flex; justify-content: center; }
.tree ul li {
  padding-left: 16px;
  background:
    linear-gradient(#a8a8a8, #a8a8a8) 4px 0 / 1px 100% no-repeat,
    linear-gradient(#a8a8a8, #a8a8a8) 4px 8px / 12px 1px no-repeat;
}
.tree ul li:last-child {
  background:
    linear-gradient(#a8a8a8, #a8a8a8) 4px 0 / 1px 8px no-repeat,
    linear-gradient(#a8a8a8, #a8a8a8) 4px 8px / 12px 1px no-repeat;
}
.tree .leaves li { padding-left: 25px; background-size: 1px 100%, 20px 1px; }
.tree .leaves li:last-child { background-size: 1px 8px, 20px 1px; }
.focus { outline: 1px dashed #333; }
.tree .focus { line-height: 13px; }

.bar { display: flex; flex-wrap: wrap; align-content: flex-start; gap: 4px; height: 45px; padding: 2px 0 0 1px; }
.bar .wide { margin-left: 5px; }
.bar .wider { margin-left: 18px; }
.bar .del { margin-left: 1px; }
.setlist {
  flex: 1;
  padding: 1px 0 0 10px;
  border: 1px solid #5b97d0;
  border-bottom: 0;
  background: #fff;
  font: 11px/15px "Noto Sans", sans-serif;
}
.setlist li {
  display: flex;
  align-items: center;
  height: 19px;
  padding-left: 10px;
  background:
    repeating-linear-gradient(#333 0 1px, transparent 1px 2px) 0 0 / 1px 100% no-repeat,
    repeating-linear-gradient(90deg, #333 0 1px, transparent 1px 2px) 0 9px / 10px 1px no-repeat;
}
.setlist li:first-child { background-position: 0 9px, 0 9px; }
.setlist li:last-child { background-size: 1px 9px, 10px 1px; }
.setlist svg { width: 16px; height: 16px; margin-right: 1px; }
.setlist span { padding: 1px 2px; }

/* Viewport */
.view { position: relative; flex: 1; min-width: 0; background: #000; overflow: hidden; }
.scene { position: absolute; left: 0; top: 0; }
.notes { position: absolute; left: 0; top: 0; pointer-events: none; }

/* Find Items window */
.dialog { position: absolute; left: 21px; top: 25px; width: 572px; border: 3px solid #5c5c5c; outline: 1px solid #a8a8a8; outline-offset: -3px; padding: 1px; background: #f0f0f0; }
.dialog .cap { height: 22px; padding: 0 6px 0 5px; }
.dbody { display: grid; grid-template-columns: 222px 319px; gap: 12px; padding: 5px 0 0 7px; }
.left { display: flex; flex-direction: column; }
.left label { line-height: 13px; }
.left .combo { margin: 1px 0 7px 6px; }
.files { flex: 1; display: flex; align-items: flex-start; gap: 3px; margin: 0 0 6px 6px; padding: 1px 0 0 9px; border: 1px solid #e0e0e0; border-top-color: #777; border-left-color: #777; background: #fff; font-weight: bold; }
.files button { margin-top: 3px; background: #0a58a8; color: #fff; }
.files svg { margin-top: 1px; }
.files span { background: #0078d7; color: #fff; line-height: 15px; outline: 1px dashed #222; outline-offset: -1px; }
.grid { height: 338px; border: 1px solid #828790; background: #fff; }
table { width: 281px; border-collapse: collapse; table-layout: fixed; }
th, td { padding: 0 0 0 5px; font-weight: normal; text-align: left; }
th:first-child { width: 71px; padding-left: 6px; }
th { height: 25px; border-right: 1px solid #e5e5e5; }
td { height: 17px; }
td.ind { padding-left: 22px; }
.combo.cell { width: 52px; margin-left: 18px; }
.checks { display: grid; margin-top: 8px; }
.checks label { display: flex; align-items: center; gap: 2px; height: 16px; line-height: 16px; }
.checks input { appearance: none; width: 13px; height: 13px; margin: 0; border: 1px solid #333; background: #fff; display: grid; place-items: center; }
.checks input::before { content: ""; width: 4px; height: 8px; margin-top: -2px; border: solid #333; border-width: 0 1px 1px 0; transform: rotate(42deg); }
.mode { display: flex; gap: 11px; margin-top: 3px; }
.mode label { line-height: 12px; }
.mode .combo { width: 157px; margin-top: 1px; }
.actions { display: flex; gap: 9px; padding: 5px 9px 5px 7px; }
.actions button { width: 73px; height: 22px; border: 1px solid #adadad; background: #e1e1e1; }
.actions .primary { border: 2px solid #0078d7; }
.actions .push { margin-left: auto; }

.green { --top: #a9d08f; --side: #4d8a3a; --front: #7fb069; --edge: #2f6b25; }
.ice { --top: #eaf6fe; --side: #c2e2f8; --front: #d8eefc; --edge: #4a9ad4; }
.cool { --glow: #c8dcf8; --rim: #5a7aa8; }
.warm { --glow: #ffd83a; --rim: #b8860b; }
```
